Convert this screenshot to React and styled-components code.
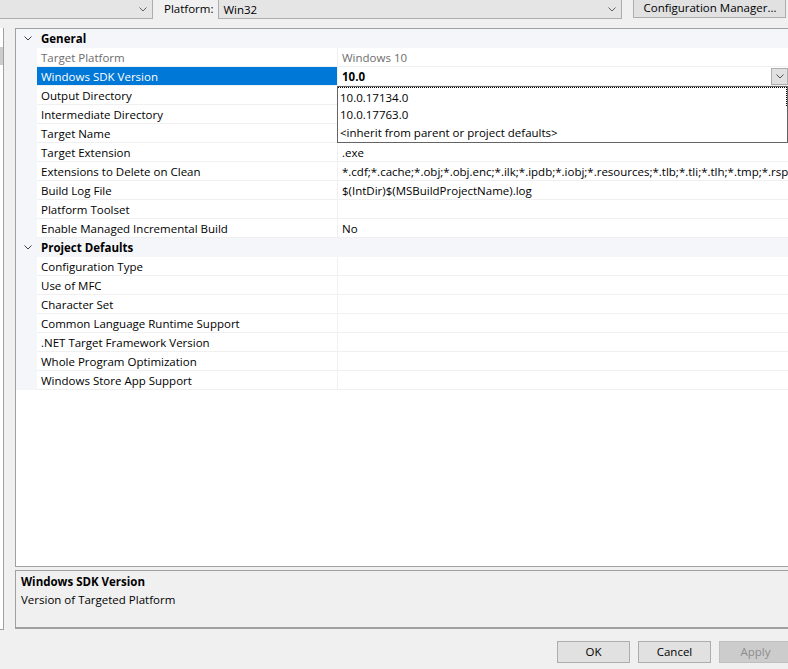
import React from "react";
import styled, { createGlobalStyle } from "styled-components";

const Global = createGlobalStyle`
  html, body { margin: 0; padding: 0; }
  body {
    background: #f0f0f0;
    font-family: "Open Sans", "Noto Sans", sans-serif;
    font-size: 11.5px;
    color: #000;
    overflow: hidden;
  }
  #root { width: 788px; height: 669px; overflow: hidden; }
`;

const Page = styled.div`
  width: 788px;
  height: 669px;
  display: flex;
  flex-direction: column;
  background: #f0f0f0;
  overflow: hidden;
`;

const TopBar = styled.div`
  height: 19px;
  display: flex;
  align-items: flex-start;
  flex-shrink: 0;
`;

const Combo = styled.div`
  box-sizing: border-box;
  width: ${(p) => p.$w}px;
  flex-shrink: 0;
  height: 19px;
  background: #e5e5e5;
  border: 1px solid #adadad;
  border-top: none;
  ${(p) => (p.$noLeft ? "border-left: none;" : "")}
  display: flex;
  align-items: center;
  padding-left: 4px;
  line-height: 17px;
`;

const ComboText = styled.span`
  flex: 1;
`;

const Chevron = styled.svg`
  width: 8px;
  height: 5px;
  margin-right: ${(p) => p.$mr || 0}px;
  flex-shrink: 0;
`;

const Label = styled.span`
  margin-left: 11px;
  margin-right: 5px;
  line-height: 17px;
  white-space: nowrap;
`;

const TopButton = styled.div`
  box-sizing: border-box;
  margin-left: 11px;
  width: 153px;
  flex-shrink: 0;
  height: 18px;
  background: #e1e1e1;
  border: 1px solid #adadad;
  border-top: none;
  text-align: center;
  line-height: 15px;
  white-space: nowrap;
`;

const Body = styled.div`
  height: 601px;
  display: flex;
  margin-top: 9px;
  flex-shrink: 0;
`;

const TreePanel = styled.div`
  width: 3px;
  height: 601px;
  border-right: 1px solid #a0a0a0;
  border-bottom: 1px solid #a0a0a0;
  background: #fff;
  flex-shrink: 0;
  display: flex;
  flex-direction: column;
`;

const TreeSel = styled.div`
  margin-top: 19px;
  height: 18px;
  background: #cccccc;
`;

const RightCol = styled.div`
  margin-left: 11px;
  width: 775px;
  flex-shrink: 0;
  display: flex;
  flex-direction: column;
`;

const Grid = styled.div`
  position: relative;
  box-sizing: border-box;
  height: 539px;
  background: #fff;
  border-top: 1px solid #a0a0a0;
  border-left: 1px solid #a0a0a0;
  border-bottom: 1px solid #a0a0a0;
  display: flex;
  flex-direction: column;
`;

const CatRow = styled.div`
  height: 19px;
  display: flex;
  align-items: center;
  background: #f4f6f9;
  font-weight: 700;
`;

const CatToggle = styled.div`
  width: 21px;
  display: flex;
  justify-content: center;
  padding-left: 2px;
  box-sizing: border-box;
`;

const CatTitle = styled.span`
  padding-left: 4px;
`;

const Row = styled.div`
  height: 19px;
  display: flex;
`;

const Gutter = styled.div`
  width: 21px;
  background: #f4f6f9;
  flex-shrink: 0;
`;

const NameCell = styled.div`
  box-sizing: border-box;
  width: 301px;
  flex-shrink: 0;
  padding: 1px 0 0 4px;
  line-height: 18px;
  border-bottom: 1px solid #f0f0f0;
  border-right: 1px solid #f0f0f0;
  white-space: nowrap;
  overflow: hidden;
  background: ${(p) => (p.$sel ? "#0078d7" : "#fff")};
  color: ${(p) => (p.$sel ? "#fff" : p.$dim ? "#6d6d6d" : "#000")};
`;

const ValueCell = styled.div`
  box-sizing: border-box;
  flex: 1;
  min-width: 0;
  padding: 1px 0 0 4px;
  line-height: 18px;
  border-bottom: 1px solid #f0f0f0;
  white-space: nowrap;
  overflow: hidden;
  display: flex;
  align-items: flex-start;
  color: ${(p) => (p.$dim ? "#6d6d6d" : "#000")};
  font-weight: ${(p) => (p.$bold ? 700 : 400)};
`;

const ValueText = styled.span`
  flex: 1;
  min-width: 0;
  overflow: hidden;
`;

const DropBtn = styled.div`
  box-sizing: border-box;
  width: 17px;
  height: 17px;
  margin-right: 2px;
  flex-shrink: 0;
  background: #e1e1e1;
  border: 1px solid #adadad;
  display: flex;
  align-items: center;
  justify-content: center;
`;

const DropList = styled.div`
  position: absolute;
  left: 321px;
  top: 57px;
  width: 451px;
  height: 57px;
  box-sizing: border-box;
  background: #fff;
  border: 1px solid #646464;
  display: flex;
  flex-direction: column;
`;

const DropItem = styled.div`
  box-sizing: border-box;
  height: ${(p) => (p.$focus ? 19 : 18)}px;
  line-height: 18px;
  padding: ${(p) => (p.$focus ? 1 : 0)}px 0 0 2px;
  white-space: nowrap;
  ${(p) => (p.$focus ? "border-top: 1px dotted #000; border-right: 1px dotted #000;" : "")}
`;

const Desc = styled.div`
  box-sizing: border-box;
  margin-top: 3px;
  height: 59px;
  border-top: 1px solid #a0a0a0;
  border-left: 1px solid #a0a0a0;
  border-bottom: 2px solid #a0a0a0;
  padding: 2px 0 0 5px;
  display: flex;
  flex-direction: column;
`;

const DescTitle = styled.div`
  font-weight: 700;
  line-height: 18px;
`;

const DescText = styled.div`
  line-height: 18px;
`;

const Footer = styled.div`
  width: 792px;
  display: flex;
  justify-content: flex-end;
  gap: 8px;
  margin-top: 12px;
  flex-shrink: 0;
`;

const Btn = styled.div`
  box-sizing: border-box;
  width: 73px;
  height: 22px;
  border: 1px solid ${(p) => (p.$disabled ? "#bfbfbf" : "#adadad")};
  background: ${(p) => (p.$disabled ? "#cccccc" : "#e1e1e1")};
  color: ${(p) => (p.$disabled ? "#8c8c8c" : "#000")};
  text-align: center;
  line-height: 19px;
`;

const Down = ({ mr, color = "#606060" }) => (
  <Chevron $mr={mr} viewBox="0 0 8 5">
    <path d="M0.5 0.5 L4 4 L7.5 0.5" fill="none" stroke={color} strokeWidth="1" />
  </Chevron>
);

const general = [
  { name: "Target Platform", value: "Windows 10", dim: true },
  { name: "Windows SDK Version", value: "10.0", sel: true },
  { name: "Output Directory", value: "" },
  { name: "Intermediate Directory", value: "" },
  { name: "Target Name", value: "" },
  { name: "Target Extension", value: ".exe" },
  {
    name: "Extensions to Delete on Clean",
    value: "*.cdf;*.cache;*.obj;*.obj.enc;*.ilk;*.ipdb;*.iobj;*.resources;*.tlb;*.tli;*.tlh;*.tmp;*.rsp;*.pg",
  },
  { name: "Build Log File", value: "$(IntDir)$(MSBuildProjectName).log" },
  { name: "Platform Toolset", value: "" },
  { name: "Enable Managed Incremental Build", value: "No" },
];

const defaults = [
  "Configuration Type",
  "Use of MFC",
  "Character Set",
  "Common Language Runtime Support",
  ".NET Target Framework Version",
  "Whole Program Optimization",
  "Windows Store App Support",
];

const Category = ({ title }) => (
  <CatRow>
    <CatToggle>
      <Down color="#404040" />
    </CatToggle>
    <CatTitle>{title}</CatTitle>
  </CatRow>
);

export default function App() {
  return (
    <Page>
      <Global />
      <TopBar>
        <Combo $w={153} $noLeft>
          <ComboText />
          <Down mr={5} />
        </Combo>
        <Label>Platform:</Label>
        <Combo $w={404}>
          <ComboText>Win32</ComboText>
          <Down mr={5} />
        </Combo>
        <TopButton>Configuration Manager...</TopButton>
      </TopBar>
      <Body>
        <TreePanel>
          <TreeSel />
        </TreePanel>
        <RightCol>
          <Grid>
            <Category title="General" />
            {general.map((r) => (
              <Row key={r.name}>
                <Gutter />
                <NameCell $sel={r.sel} $dim={r.dim}>
                  {r.name}
                </NameCell>
                <ValueCell $dim={r.dim} $bold={r.sel}>
                  <ValueText>{r.value}</ValueText>
                  {r.sel && (
                    <DropBtn>
                      <Down color="#505050" />
                    </DropBtn>
                  )}
                </ValueCell>
              </Row>
            ))}
            <Category title="Project Defaults" />
            {defaults.map((n) => (
              <Row key={n}>
                <Gutter />
                <NameCell>{n}</NameCell>
                <ValueCell />
              </Row>
            ))}
            <DropList>
              <DropItem $focus>10.0.17134.0</DropItem>
              <DropItem>10.0.17763.0</DropItem>
              <DropItem>&lt;inherit from parent or project defaults&gt;</DropItem>
            </DropList>
          </Grid>
          <Desc>
            <DescTitle>Windows SDK Version</DescTitle>
            <DescText>Version of Targeted Platform</DescText>
          </Desc>
        </RightCol>
      </Body>
      <Footer>
        <Btn>OK</Btn>
        <Btn>Cancel</Btn>
        <Btn $disabled>Apply</Btn>
      </Footer>
    </Page>
  );
}
